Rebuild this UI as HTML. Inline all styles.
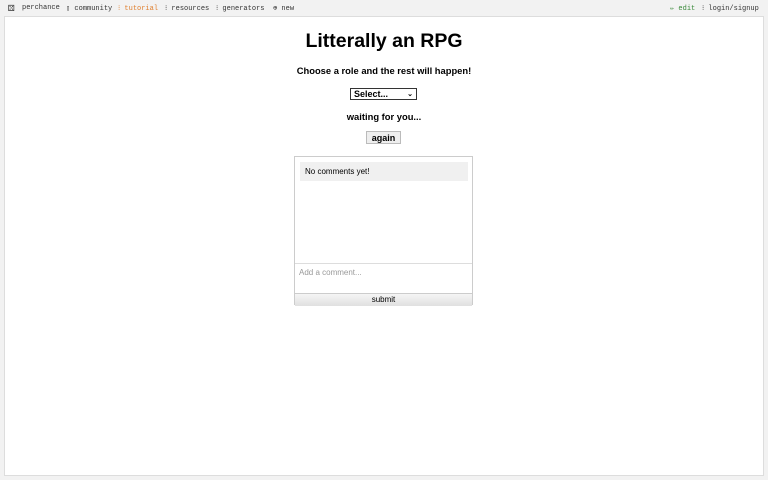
<!DOCTYPE html>
<html><head><meta charset="utf-8"><style>
body{margin:0;width:768px;height:480px;background:#f2f2f2;font-family:"Liberation Sans",sans-serif;position:relative;overflow:hidden}
.top{position:absolute;top:0;left:0;right:0;height:16px;font-family:"Liberation Mono",monospace;font-size:7px;color:#333}
.top span{position:absolute;top:4px;white-space:nowrap}
.main{position:absolute;left:4px;top:16px;width:758px;height:458px;background:#fff;border:1px solid #ddd}
h1{position:absolute;top:30px;left:0;width:768px;text-align:center;margin:0;font-size:19.5px;font-weight:bold}
.c{position:absolute;left:0;width:768px;text-align:center;font-weight:bold;font-size:9.4px}
</style></head><body>
<div class="top">
<span style="left:8px;top:1px;font-size:11px">⚄</span>
<span style="left:22px">perchance</span>
<span style="left:66px">▯ community</span>
<span style="left:118px;color:#e08030">⁝ tutorial</span>
<span style="left:165px">⁝ resources</span>
<span style="left:216px">⁝ generators</span>
<span style="left:273px">⊕ new</span>
<span style="left:670px;color:#3a8a3a">✏ edit</span>
<span style="left:702px">⁝ login/signup</span>
</div>
<div class="main"></div>
<h1>Litterally an RPG</h1>
<div class="c" style="top:65px">Choose a role and the rest will happen!</div>
<div style="position:absolute;left:350px;top:88px;width:67px;height:12px;border:1px solid #333;font-size:9px;font-weight:bold;line-height:11px;box-sizing:border-box;padding-left:3px;background:#fff">Select...<span style="position:absolute;right:3px;font-size:7px">⌄</span></div>
<div class="c" style="top:111px">waiting for you...</div>
<div style="position:absolute;left:366px;top:131px;width:35px;height:13px;background:#eee;border:1px solid #bbb;box-sizing:border-box;font-size:9px;font-weight:bold;text-align:center;line-height:12px">again</div>
<div style="position:absolute;left:294px;top:156px;width:179px;height:149px;border:1px solid #ccc;box-sizing:border-box;background:#fff">
<div style="position:absolute;left:5px;top:5px;width:168px;height:19px;background:#f0f0f0;font-size:8px;line-height:19px;padding-left:5px;box-sizing:border-box">No comments yet!</div>
<div style="position:absolute;left:0;right:0;top:106px;border-top:1px solid #ddd;height:30px;font-size:8px;color:#999;padding:4px 4px;box-sizing:border-box">Add a comment...</div>
<div style="position:absolute;left:0;right:0;top:136px;height:12px;background:linear-gradient(#f5f5f5,#e0e0e0);border-top:1px solid #ccc;font-size:8px;text-align:center;line-height:11px">submit</div>
</div>
</body></html>
